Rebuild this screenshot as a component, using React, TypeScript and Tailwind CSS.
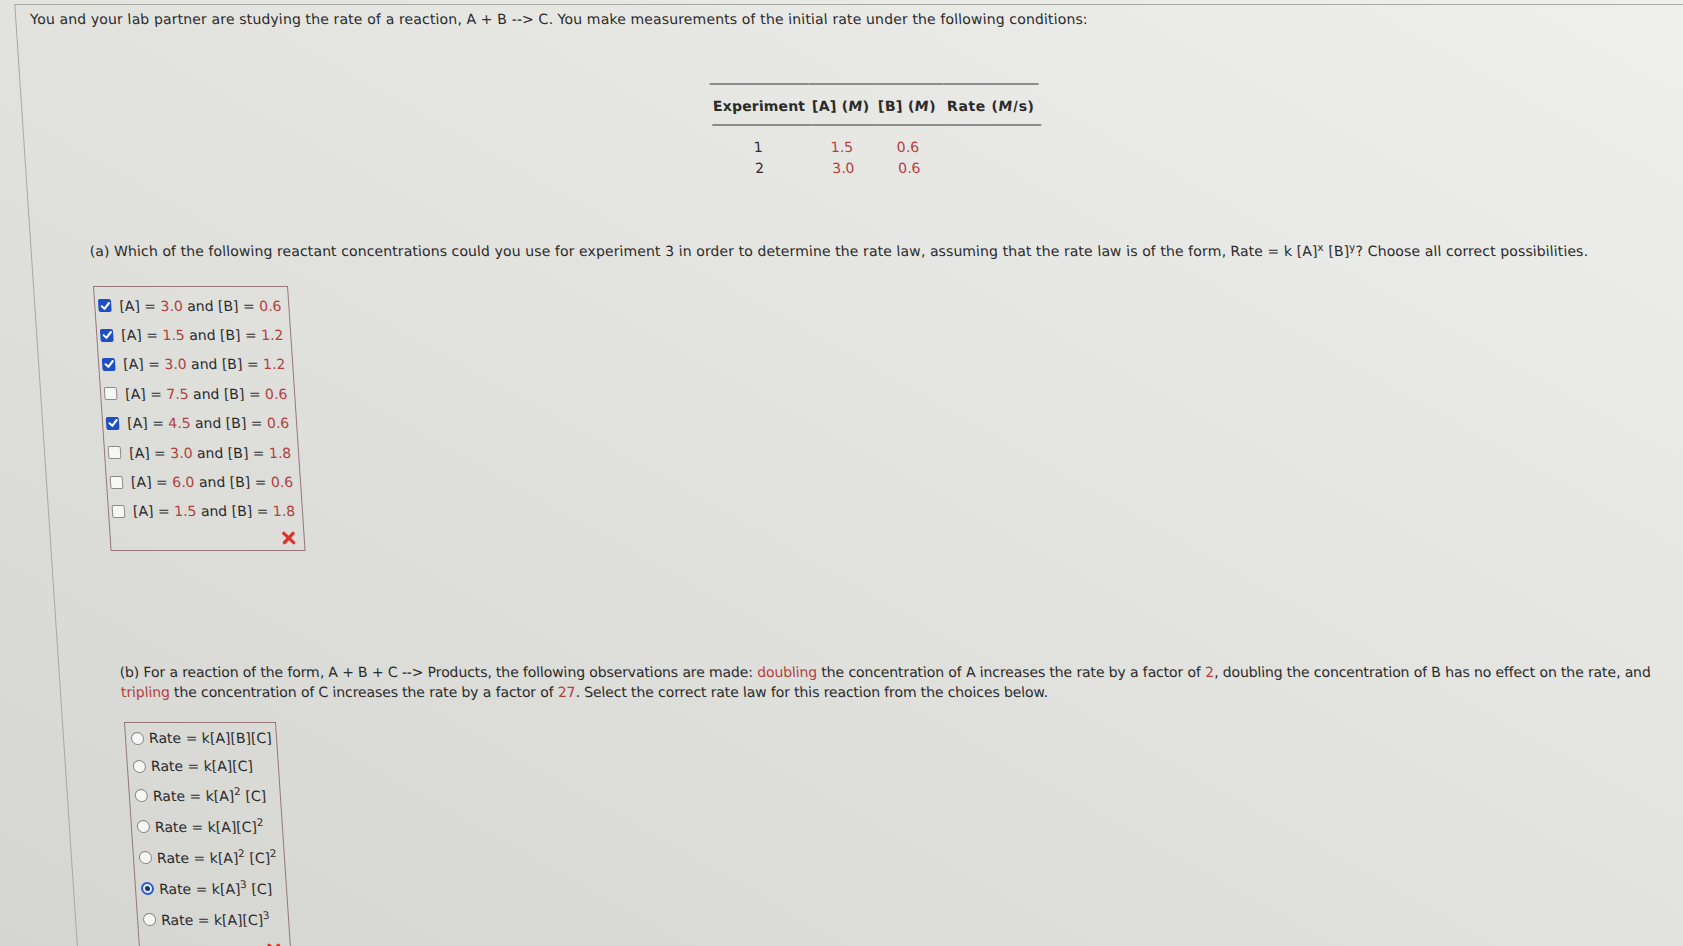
import React from "react";

const RED = "text-[#b3413d]";

function Check({ checked }: { checked: boolean }) {
  if (checked) {
    return (
      <span className="inline-flex h-[13px] w-[13px] shrink-0 items-center justify-center rounded-[2px] bg-[#1f4fc4]">
        <svg viewBox="0 0 12 12" className="h-[12px] w-[12px]">
          <path d="M2.4 6.3 L5 8.8 L9.8 3" fill="none" stroke="#ffffff" strokeWidth="2.1" strokeLinecap="round" strokeLinejoin="round" />
        </svg>
      </span>
    );
  }
  return <span className="h-[13px] w-[13px] shrink-0 rounded-[2px] border border-[#8a8a8a] bg-[#f6f6f5]" />;
}

function Radio({ selected }: { selected: boolean }) {
  if (selected) {
    return (
      <span className="inline-flex h-[13px] w-[13px] shrink-0 items-center justify-center rounded-full border-2 border-[#2d5bd2] bg-[#e4ebfb]">
        <span className="h-[5px] w-[5px] rounded-full bg-[#17327e]" />
      </span>
    );
  }
  return <span className="h-[13px] w-[13px] shrink-0 rounded-full border border-[#858585] bg-[#f6f6f5]" />;
}

function XMark() {
  return (
    <svg viewBox="0 0 12 12" className="h-[14px] w-[14px]">
      <path d="M2 2 L10 10 M10 2 L2 10" stroke="#dc322c" strokeWidth="2.8" strokeLinecap="round" />
    </svg>
  );
}

const checks: [string, string, boolean][] = [
  ["3.0", "0.6", true],
  ["1.5", "1.2", true],
  ["3.0", "1.2", true],
  ["7.5", "0.6", false],
  ["4.5", "0.6", true],
  ["3.0", "1.8", false],
  ["6.0", "0.6", false],
  ["1.5", "1.8", false],
];

export default function App() {
  return (
    <div className="relative h-[946px] w-[1683px] overflow-hidden bg-[linear-gradient(to_bottom_left,#efefed,#d5d5d1)] font-['DejaVu_Sans',sans-serif] text-[14px] leading-[20px] text-[#2b2b2b]">
      <div className="h-full origin-top-left skew-x-[3.8deg] pl-[14px] pt-[4px]">
        <div className="h-[1000px] border-l border-t border-[#a8a8a5] pl-[14px] pt-[4px]">
          <p className="whitespace-nowrap tracking-[0.15px]">
            You and your lab partner are studying the rate of a reaction, A + B --&gt; C. You make measurements of the initial rate under the following conditions:
          </p>

          <table className="ml-[675px] mt-[54px] border-collapse">
            <thead>
              <tr className="border-y-2 border-[#8c8c8c]">
                <th className="w-[99px] pb-[8px] pl-[2px] pt-[11px] text-left font-bold tracking-[0.15px]">Experiment</th>
                <th className="w-[66px] pb-[8px] pl-[2px] pt-[11px] text-left font-bold tracking-[0.3px]">
                  [A] (<i>M</i>)
                </th>
                <th className="w-[69px] pb-[8px] pl-[2px] pt-[11px] text-left font-bold tracking-[0.4px]">
                  [B] (<i>M</i>)
                </th>
                <th className="w-[95px] pb-[8px] pl-[2px] pt-[11px] text-left font-bold tracking-[0.6px]">
                  Rate (<i>M</i>/s)
                </th>
              </tr>
            </thead>
            <tbody className="leading-[21px]">
              <tr>
                <td className="pl-[40px] pt-[11px]">1</td>
                <td className={`pl-[18px] pt-[11px] ${RED}`}>1.5</td>
                <td className={`pl-[18px] pt-[11px] ${RED}`}>0.6</td>
                <td className="pt-[11px]"></td>
              </tr>
              <tr>
                <td className="pl-[40px]">2</td>
                <td className={`pl-[18px] ${RED}`}>3.0</td>
                <td className={`pl-[18px] ${RED}`}>0.6</td>
                <td></td>
              </tr>
            </tbody>
          </table>

          <p className="ml-[44px] mt-[62px] whitespace-nowrap tracking-[0.11px]">
            (a) Which of the following reactant concentrations could you use for experiment 3 in order to determine the rate law, assuming that the rate law is of the form, Rate = k [A]<sup>x</sup> [B]<sup>y</sup>? Choose all correct possibilities.
          </p>

          <div className="ml-[45px] mt-[25px] w-[195px] border border-[#977777] pl-[3px] pt-[4px]">
            {checks.map(([a, b, c], i) => (
              <div key={i} className="flex h-[29.4px] items-center gap-[8px]">
                <Check checked={c} />
                <span className="whitespace-nowrap">
                  [A] = <span className={RED}>{a}</span> and [B] = <span className={RED}>{b}</span>
                </span>
              </div>
            ))}
            <div className="flex h-[24px] items-center justify-end pr-[8px]">
              <XMark />
            </div>
          </div>

          <p className="ml-[46px] mt-[111px] whitespace-nowrap tracking-[-0.11px]">
            (b) For a reaction of the form, A + B + C --&gt; Products, the following observations are made: <span className={RED}>doubling</span> the concentration of A increases the rate by a factor of <span className={RED}>2</span>, doubling the concentration of B has no effect on the rate, and
            <br />
            <span className={RED}>tripling</span> the concentration of C increases the rate by a factor of <span className={RED}>27</span>. Select the correct rate law for this reaction from the choices below.
          </p>

          <div className="ml-[47px] mt-[20px] w-[152px] border border-[#977777] pl-[5px] pt-[1px]">
            <div className="flex h-[28px] items-center gap-[5px]">
              <Radio selected={false} />
              <span className="whitespace-nowrap">Rate = k[A][B][C]</span>
            </div>
            <div className="flex h-[28px] items-center gap-[5px]">
              <Radio selected={false} />
              <span className="whitespace-nowrap">Rate = k[A][C]</span>
            </div>
            <div className="flex h-[31px] items-center gap-[5px]">
              <Radio selected={false} />
              <span className="whitespace-nowrap">
                Rate = k[A]<sup>2</sup> [C]
              </span>
            </div>
            <div className="flex h-[31px] items-center gap-[5px]">
              <Radio selected={false} />
              <span className="whitespace-nowrap">
                Rate = k[A][C]<sup>2</sup>
              </span>
            </div>
            <div className="flex h-[31px] items-center gap-[5px]">
              <Radio selected={false} />
              <span className="whitespace-nowrap">
                Rate = k[A]<sup>2</sup> [C]<sup>2</sup>
              </span>
            </div>
            <div className="flex h-[31px] items-center gap-[5px]">
              <Radio selected={true} />
              <span className="whitespace-nowrap">
                Rate = k[A]<sup>3</sup> [C]
              </span>
            </div>
            <div className="flex h-[31px] items-center gap-[5px]">
              <Radio selected={false} />
              <span className="whitespace-nowrap">
                Rate = k[A][C]<sup>3</sup>
              </span>
            </div>
            <div className="flex h-[30px] items-center justify-end pr-[9px]">
              <XMark />
            </div>
          </div>
        </div>
      </div>
    </div>
  );
}
